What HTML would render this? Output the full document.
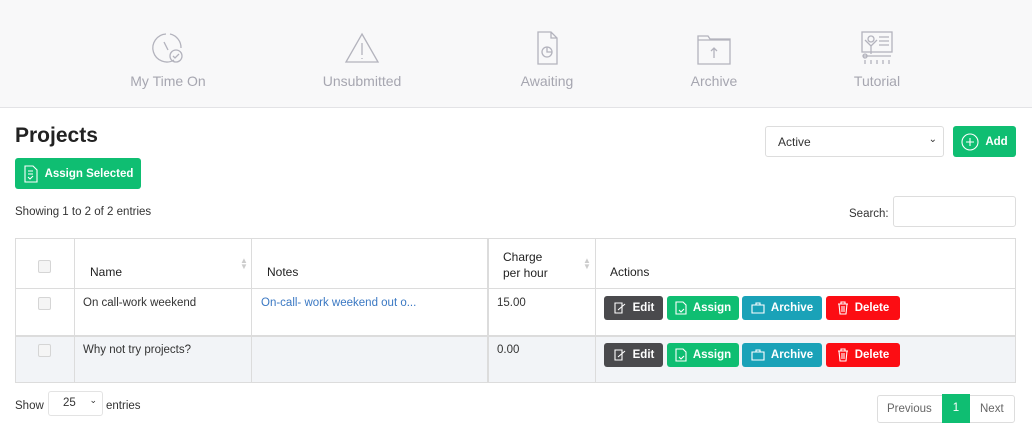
<!DOCTYPE html>
<html><head><style>
*{box-sizing:border-box;margin:0;padding:0}
body{width:1032px;height:435px;background:#fff;font-family:"Liberation Sans",sans-serif;color:#333;position:relative;overflow:hidden;font-size:12px}
.abs{position:absolute}
.top{left:0;top:0;width:1032px;height:108px;background:#f8f8f9;border-bottom:1px solid #e3e3e6}
.nav{position:absolute;top:28px;width:120px;text-align:center;color:#a6a6b0;font-size:14px}
.nav svg{display:block;margin:0 auto 5px;stroke:#b3b3bd;fill:none;stroke-width:1.3}
.btn{position:absolute;border-radius:3px;color:#fff;font-weight:bold;font-size:11.5px;display:flex;align-items:center;justify-content:center;gap:6px}
.btn svg{stroke:#fff;fill:none;stroke-width:1.1}
.g{background:#0fbe72}
.cb{position:absolute;width:13px;height:13px;border:1px solid #d5d5d5;border-radius:2px;background:#f5f5f5}
</style></head><body>
<div class="abs top"></div>
<div class="nav" style="left:108px"><svg width="40" height="40" viewBox="0 0 40 40"><path d="M18 6 A14 14 0 1 0 26 32"/><path d="M22 6 A14 14 0 0 1 33 20"/><path d="M16 14 L20 22"/><circle cx="28" cy="28" r="6"/><path d="M25 28 l2 2 4-4"/></svg>My Time On</div>
<div class="nav" style="left:302px"><svg width="40" height="40" viewBox="0 0 40 40"><path d="M20 6 L36 34 H4 Z"/><path d="M20 15 V27 M20 30 V31"/></svg>Unsubmitted</div>
<div class="nav" style="left:487px"><svg width="40" height="40" viewBox="0 0 40 40"><path d="M11 4 H24 L30 10 V36 H11 Z M24 4 V10 H30"/><circle cx="20" cy="24" r="5"/><path d="M20 19 V24 H25"/></svg>Awaiting</div>
<div class="nav" style="left:654px"><svg width="40" height="40" viewBox="0 0 40 40"><path d="M4 8 H14 L16 11 H36 V36 H4 Z M4 12 H36"/><path d="M20 30 V20 M17 23 L20 20 23 23"/></svg>Archive</div>
<div class="nav" style="left:817px"><svg width="40" height="40" viewBox="0 0 40 40"><rect x="5" y="4" width="30" height="20"/><circle cx="14" cy="11" r="3"/><path d="M8 12 L14 18 20 12 M14 18 V26 M22 9 H32 M22 13 H32 M22 17 H32"/><path d="M6 28 H34 M8 30 a2 2 0 1 1 0.1 0 M8 32 v4 M14 32 v4 M20 32 v4 M26 32 v4 M32 32 v4"/></svg>Tutorial</div>

<div class="abs" style="left:15px;top:124px;font-size:21px;font-weight:bold;color:#222">Projects</div>
<div class="btn g" style="left:15px;top:158px;width:126px;height:31px"><svg width="16" height="18" viewBox="0 0 16 18"><path d="M2 1 H10 L14 5 V17 H2 Z M5 6 H10 M5 9 H10 M5 12 l2 2 3-3"/></svg>Assign Selected</div>
<div class="abs" style="left:765px;top:126px;width:179px;height:31px;border:1px solid #ddd;border-radius:3px;padding:8px 12px;font-size:12px">Active<span style="position:absolute;right:6px;top:7px;font-size:10px">&#8964;</span></div>
<div class="btn g" style="left:953px;top:126px;width:63px;height:31px"><svg width="18" height="18" viewBox="0 0 18 18"><circle cx="9" cy="9" r="8"/><path d="M9 5 V13 M5 9 H13"/></svg>Add</div>
<div class="abs" style="left:15px;top:206px;font-size:11.5px">Showing 1 to 2 of 2 entries</div>
<div class="abs" style="left:849px;top:208px;font-size:11.5px">Search:</div>
<div class="abs" style="left:893px;top:196px;width:123px;height:31px;border:1px solid #ddd;border-radius:3px"></div>

<div class="abs" style="left:15px;top:238px;width:1001px;height:145px;border:1px solid #dcdcdc"></div>
<div class="abs" style="left:16px;top:288px;width:999px;height:1px;background:#dcdcdc"></div>
<div class="abs" style="left:16px;top:335px;width:999px;height:47px;background:#f2f4f7;border-top:2px solid #dcdcdc"></div>
<div class="abs" style="left:74px;top:239px;width:1px;height:143px;background:#dcdcdc"></div>
<div class="abs" style="left:251px;top:239px;width:1px;height:143px;background:#dcdcdc"></div>
<div class="abs" style="left:487px;top:239px;width:2px;height:143px;background:#dcdcdc"></div>
<div class="abs" style="left:595px;top:239px;width:1px;height:143px;background:#dcdcdc"></div>
<div class="cb" style="left:38px;top:260px"></div>
<div class="cb" style="left:38px;top:297px"></div>
<div class="cb" style="left:38px;top:344px"></div>
<div class="abs" style="left:90px;top:265px;font-size:12px;color:#222">Name</div>
<div class="abs" style="left:240px;top:258px;font-size:8px;color:#ccc;line-height:6px">▲<br>▼</div>
<div class="abs" style="left:267px;top:265px;font-size:12px;color:#222">Notes</div>
<div class="abs" style="left:503px;top:249px;font-size:12px;color:#222;line-height:16px">Charge<br>per hour</div>
<div class="abs" style="left:583px;top:258px;font-size:8px;color:#ccc;line-height:6px">▲<br>▼</div>
<div class="abs" style="left:610px;top:265px;font-size:12px;color:#222">Actions</div>
<div class="abs" style="left:83px;top:297px;font-size:11.5px">On call-work weekend</div>
<div class="abs" style="left:261px;top:297px;font-size:11.5px;color:#3a78c3">On-call- work weekend out o...</div>
<div class="abs" style="left:497px;top:297px;font-size:11.5px">15.00</div>
<div class="abs" style="left:83px;top:344px;font-size:11.5px">Why not try projects?</div>
<div class="abs" style="left:497px;top:344px;font-size:11.5px">0.00</div>

<div class="btn" style="left:604px;top:296px;width:59px;height:24px;background:#4a4a4d"><svg width="14" height="14" viewBox="0 0 14 14"><path d="M2 2 H9 V12 H2 Z M5 9 L12 3"/></svg>Edit</div>
<div class="btn g" style="left:667px;top:296px;width:72px;height:24px"><svg width="12" height="14" viewBox="0 0 12 14"><path d="M1 1 H8 L11 4 V13 H1 Z M4 9 l2 2 3-3"/></svg>Assign</div>
<div class="btn" style="left:742px;top:296px;width:80px;height:24px;background:#1aa2b8"><svg width="14" height="12" viewBox="0 0 14 12"><path d="M1 3 H13 V11 H1 Z M5 3 V1 H9 V3"/></svg>Archive</div>
<div class="btn" style="left:826px;top:296px;width:74px;height:24px;background:#fc0d13"><svg width="12" height="14" viewBox="0 0 12 14"><path d="M1 3 H11 M4 3 V1 H8 V3 M2 3 L3 13 H9 L10 3 M5 5 V11 M7 5 V11"/></svg>Delete</div>
<div class="btn" style="left:604px;top:343px;width:59px;height:24px;background:#4a4a4d"><svg width="14" height="14" viewBox="0 0 14 14"><path d="M2 2 H9 V12 H2 Z M5 9 L12 3"/></svg>Edit</div>
<div class="btn g" style="left:667px;top:343px;width:72px;height:24px"><svg width="12" height="14" viewBox="0 0 12 14"><path d="M1 1 H8 L11 4 V13 H1 Z M4 9 l2 2 3-3"/></svg>Assign</div>
<div class="btn" style="left:742px;top:343px;width:80px;height:24px;background:#1aa2b8"><svg width="14" height="12" viewBox="0 0 14 12"><path d="M1 3 H13 V11 H1 Z M5 3 V1 H9 V3"/></svg>Archive</div>
<div class="btn" style="left:826px;top:343px;width:74px;height:24px;background:#fc0d13"><svg width="12" height="14" viewBox="0 0 12 14"><path d="M1 3 H11 M4 3 V1 H8 V3 M2 3 L3 13 H9 L10 3 M5 5 V11 M7 5 V11"/></svg>Delete</div>

<div class="abs" style="left:15px;top:400px;font-size:11.5px">Show</div>
<div class="abs" style="left:48px;top:391px;width:55px;height:25px;border:1px solid #e3e3e3;border-radius:3px;font-size:11.5px;padding:5px 0 0 14px">25<span style="position:absolute;right:5px;top:3px;font-size:9px">&#8964;</span></div>
<div class="abs" style="left:106px;top:400px;font-size:11.5px">entries</div>
<div class="abs" style="left:877px;top:395px;width:138px;height:28px;border:1px solid #ddd;border-radius:3px"></div>
<div class="abs" style="left:887px;top:403px;font-size:11.5px;color:#666">Previous</div>
<div class="abs" style="left:942px;top:394px;width:28px;height:29px;background:#0fbe72;color:#fff;font-size:11.5px;text-align:center;padding-top:8px">1</div>
<div class="abs" style="left:980px;top:403px;font-size:11.5px;color:#666">Next</div>
</body></html>
